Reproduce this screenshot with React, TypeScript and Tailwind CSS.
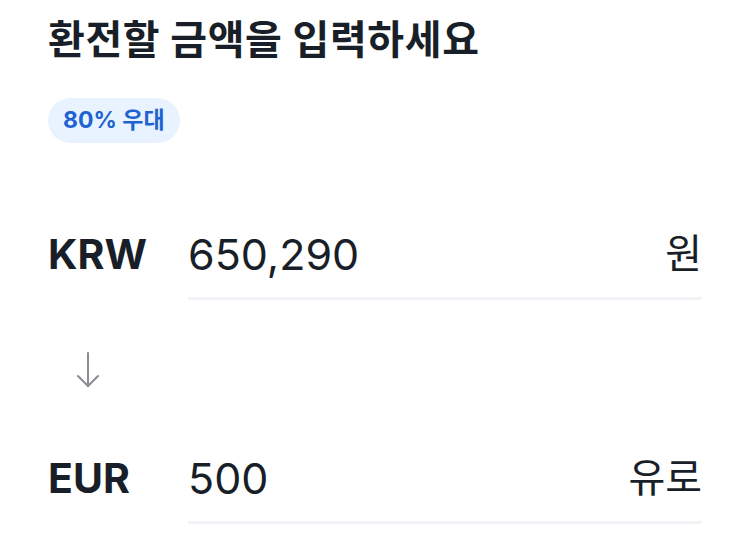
interface Row {
  code: string
  amount: string
  unit: string
}

const rows: Row[] = [
  { code: 'KRW', amount: '650,290', unit: '원' },
  { code: 'EUR', amount: '500', unit: '유로' },
]

function AmountRow({ row }: { row: Row }) {
  return (
    <div className="flex items-start">
      <div className="w-[140px] text-[41px] font-bold leading-[52px] text-[#191f28]">{row.code}</div>
      <div className="flex flex-1 items-start justify-between border-b-[3px] border-[#f2f3f6] pb-[17px]">
        <span className="text-[43px] leading-[52px] text-[#191f28]">{row.amount}</span>
        <span className="text-[40px] leading-[52px] text-[#191f28]">{row.unit}</span>
      </div>
    </div>
  )
}

export default function App() {
  return (
    <div
      className="min-h-[541px] w-[750px] bg-white px-12 pt-4"
      style={{ fontFamily: 'Inter, "Noto Sans CJK KR", sans-serif' }}
    >
      <h1 className="text-[40px] font-bold leading-[48px] tracking-[0.6px] text-[#191f28]">환전할 금액을 입력하세요</h1>

      <div className="mt-[34px] inline-flex h-[45px] items-center rounded-full bg-[#e8f3ff] px-[15px] text-[23px] font-bold text-[#1f62d1]">
        80% 우대
      </div>

      <div className="mt-[85px]">
        <AmountRow row={rows[0]} />
      </div>

      {/* arrow */}
      <div className="mt-[52px] pl-[28px]">
        <svg width="24" height="36" viewBox="0 0 24 36" fill="none" stroke="#8b8b96" strokeWidth="2" strokeLinecap="round" strokeLinejoin="round">
          <path d="M12 1V34" />
          <path d="M2 24L12 34L22 24" />
        </svg>
      </div>

      <div className="mt-[64px]">
        <AmountRow row={rows[1]} />
      </div>
    </div>
  )
}
